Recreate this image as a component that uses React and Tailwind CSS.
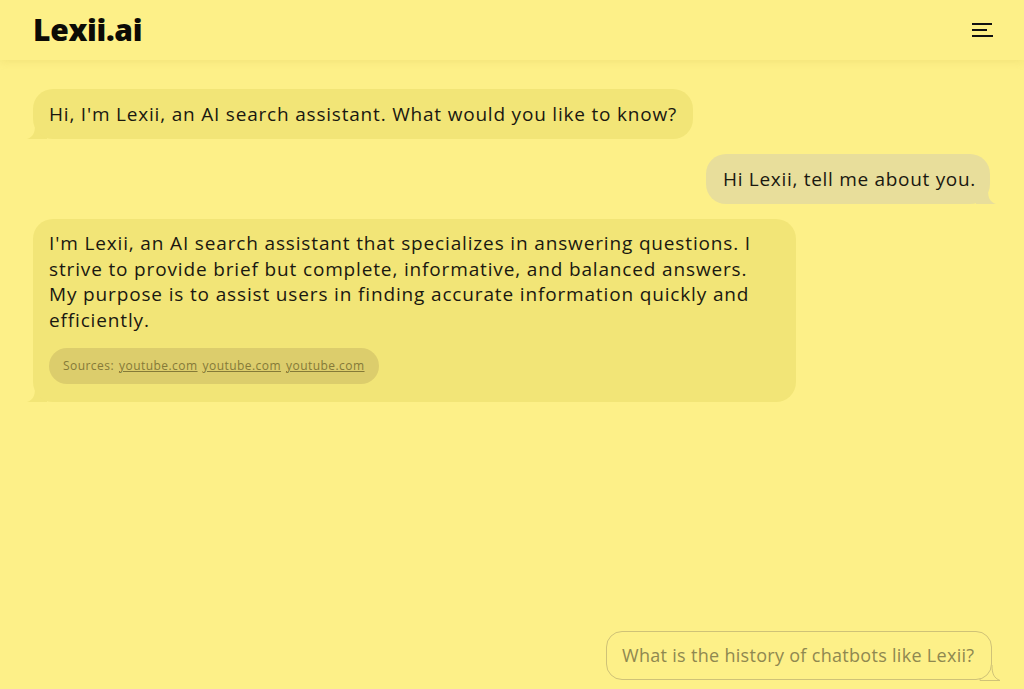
import React from "react";

function TailLeft({ color }) {
  return (
    <svg className="absolute -left-[6px] bottom-0" width="20" height="14" viewBox="0 0 20 14">
      <path d="M20 0 L20 14 L0 14 C6 12 8 8 8 0 Z" fill={color} />
    </svg>
  );
}

function TailRight({ color }) {
  return (
    <svg className="absolute -right-[6px] bottom-0" width="20" height="14" viewBox="0 0 20 14">
      <path d="M0 0 L0 14 L20 14 C14 12 12 8 12 0 Z" fill={color} />
    </svg>
  );
}

export default function App() {
  return (
    <div
      className="w-[1024px] h-[689px] bg-[#fdf088] flex flex-col overflow-hidden text-[#1a1810]"
      style={{ fontFamily: '"Open Sans", "Noto Sans", sans-serif' }}
    >
      <header className="h-[60px] shrink-0 flex items-center justify-between pl-[33px] pr-[31px] shadow-[0_2px_8px_rgba(200,180,60,0.18)] relative z-10">
        <div className="text-[30px] font-extrabold tracking-[-0.3px] text-[#0c0b06] leading-none">Lexii.ai</div>
        <button className="flex flex-col items-start gap-[4px] w-[21px]">
          <span className="block h-[2px] w-[20px] bg-[#111]" />
          <span className="block h-[2px] w-[15px] bg-[#111]" />
          <span className="block h-[2px] w-[21px] bg-[#111]" />
        </button>
      </header>

      <main className="flex-1 flex flex-col px-[33px] pt-[29px] gap-[15px]">
        <div className="self-start relative">
          <TailLeft color="#f2e577" />
          <div className="relative bg-[#f2e577] rounded-[20px] w-[660px] h-[50px] flex items-center px-[16px] text-[19px] tracking-[0.8px] whitespace-nowrap">
            Hi, I'm Lexii, an AI search assistant. What would you like to know?
          </div>
        </div>

        <div className="self-end relative mr-[1px]">
          <TailRight color="#e8de9b" />
          <div className="relative bg-[#e8de9b] rounded-[20px] w-[284px] h-[50px] flex items-center px-[17px] text-[19px] tracking-[0.7px] whitespace-nowrap">
            Hi Lexii, tell me about you.
          </div>
        </div>

        <div className="self-start relative w-[763px]">
          <TailLeft color="#f2e577" />
          <div className="relative bg-[#f2e577] rounded-[20px] pt-[12px] pb-[18px] px-[16px]">
            <p className="text-[19px] tracking-[0.85px] leading-[25.7px] whitespace-nowrap">
              I'm Lexii, an AI search assistant that specializes in answering questions. I<br />
              strive to provide brief but complete, informative, and balanced answers.<br />
              My purpose is to assist users in finding accurate information quickly and<br />
              efficiently.
            </p>
            <div className="mt-[14px] inline-flex items-center h-[36px] px-[14px] rounded-full bg-[#dccd6c] text-[12px] tracking-[0.45px] text-[#857a38] gap-[5px]">
              <span>Sources:</span>
              <a className="underline">youtube.com</a>
              <a className="underline">youtube.com</a>
              <a className="underline">youtube.com</a>
            </div>
          </div>
        </div>

        <div className="mt-auto mb-[9px] self-end mr-[-1px] relative">
          <svg className="absolute -right-[9px] bottom-[-1px]" width="22" height="16" viewBox="0 0 22 16">
            <path d="M1 0 L1 15.5 L21 15.5 C15 13 13 9 13 0" fill="#fdf088" stroke="#cfc277" strokeWidth="1" />
          </svg>
          <div className="relative w-[386px] h-[49px] rounded-[16px] border border-[#cfc277] bg-[#fdf088] flex items-center px-[15px] text-[18px] tracking-[0.3px] text-[#8f8850] whitespace-nowrap">
            What is the history of chatbots like Lexii?
          </div>
        </div>
      </main>
    </div>
  );
}
